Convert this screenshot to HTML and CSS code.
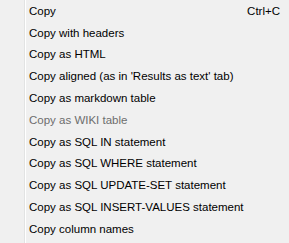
FILE: index.html
```html
<!DOCTYPE html>
<html>
<head>
<meta charset="utf-8">
<link rel="stylesheet" href="styles.css">
</head>
<body>
<div class="menu">
  <div class="item"><span class="label">Copy</span><span class="key">Ctrl+C</span></div>
  <div class="item"><span class="label">Copy with headers</span></div>
  <div class="item"><span class="label">Copy as HTML</span></div>
  <div class="item"><span class="label">Copy aligned (as in 'Results as text' tab)</span></div>
  <div class="item"><span class="label">Copy as markdown table</span></div>
  <div class="item disabled"><span class="label">Copy as WIKI table</span></div>
  <div class="item"><span class="label">Copy as SQL IN statement</span></div>
  <div class="item"><span class="label">Copy as SQL WHERE statement</span></div>
  <div class="item"><span class="label">Copy as SQL UPDATE-SET statement</span></div>
  <div class="item"><span class="label">Copy as SQL INSERT-VALUES statement</span></div>
  <div class="item"><span class="label">Copy column names</span></div>
</div>
</body>
</html>
```
FILE: styles.css
```css
html, body {
  margin: 0;
  padding: 0;
  background: #f0f0f0;
}
.menu {
  width: 289px;
  height: 243px;
  background: #f0f0f0;
  font-family: "Liberation Sans", Arial, sans-serif;
  font-size: 11.5px;
  color: #000;
  position: relative;
  overflow: hidden;
}
.menu::before {
  content: "";
  position: absolute;
  left: 24px;
  top: 0;
  bottom: 0;
  width: 1px;
  background: #e2e3e3;
  border-right: 1px solid #ffffff;
}
.item {
  display: flex;
  align-items: center;
  height: 21.8px;
  padding-left: 29px;
  padding-right: 9px;
}
.label {
  flex: 1;
  white-space: nowrap;
}
.key {
  white-space: nowrap;
}
.disabled {
  color: #6d6d6d;
}
```
